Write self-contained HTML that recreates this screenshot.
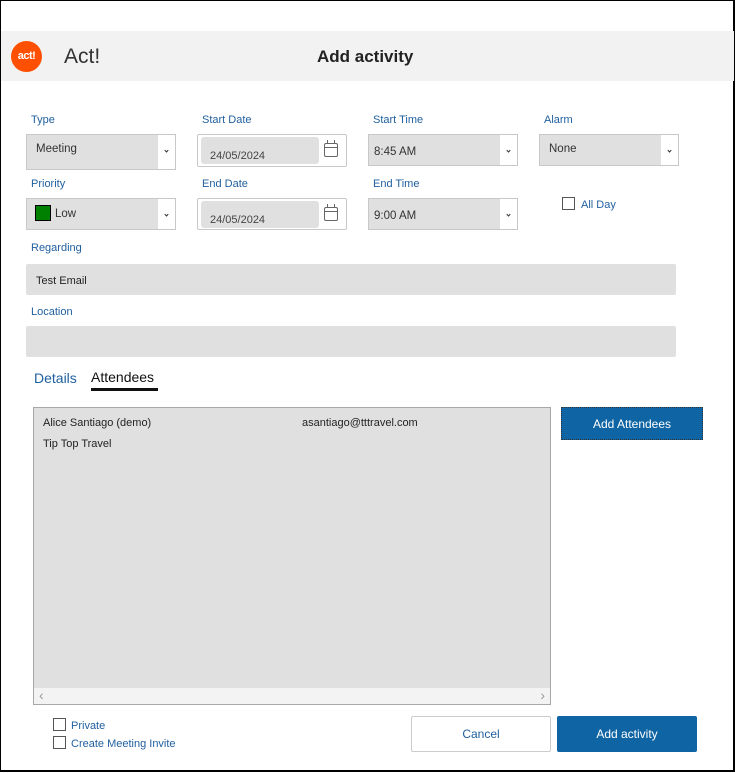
<!DOCTYPE html>
<html><head><meta charset="utf-8"><style>
*{box-sizing:border-box;margin:0;padding:0}
body{width:736px;height:773px;background:#fff;font-family:"Liberation Sans",sans-serif;position:relative;overflow:hidden}
.frame{position:absolute;left:0;top:0;width:735px;height:772px;border:1px solid #000;border-right-width:2px;border-bottom-width:2px}
.a{position:absolute}
.hdr{left:1px;top:31px;width:733px;height:50px;background:#f2f2f2}
.lbl{position:absolute;font-size:11px;color:#1f5f9f}
.sel{position:absolute;height:36px;border:1px solid #c8c8c8;background:#e0e0e0;font-size:11.5px;color:#333}
.sel .arr{position:absolute;right:0;top:0;width:17px;height:100%;background:#fff}
.sel .arr:after{content:"";position:absolute;left:7px;top:14px;width:2px;height:2px;border-right:1px solid #333;border-bottom:1px solid #333;transform:rotate(45deg)}
.date{position:absolute;height:33px;border:1px solid #c8c8c8;background:#fff;border-radius:2px}
.date .in{position:absolute;left:3px;top:2px;width:118px;height:27px;background:#e0e0e0;border-radius:3px;font-size:11px;color:#444;padding:13px 0 0 9px;line-height:12px;overflow:hidden}
.cal{position:absolute;right:8px;top:8px;width:14px;height:14px;border:1.3px solid #666;border-radius:2px}
.cal:before{content:"";position:absolute;left:0;right:0;top:3px;border-top:1.3px solid #666}
.cal:after{content:"";position:absolute;left:2px;top:-4px;width:6px;height:3px;border-left:1.3px solid #666;border-right:1.3px solid #666}
.txt{position:absolute;height:31px;background:#e0e0e0;border-radius:2px;font-size:11px;color:#222;padding:11px 0 0 10px}
.cb{position:absolute;width:13px;height:13px;border:1px solid #555;background:#fff}
</style></head><body>
<div class="frame"></div>
<div class="a hdr"></div>
<div class="a" style="left:11px;top:41px;width:31px;height:31px;border-radius:50%;background:#fe5000;color:#fff;font-size:11px;font-weight:bold;text-align:center;line-height:31px;letter-spacing:-0.5px">act!</div>
<div class="a" style="left:64px;top:45px;font-size:21px;color:#333">Act!</div>
<div class="a" style="left:317px;top:47px;font-size:17px;font-weight:bold;color:#222">Add activity</div>

<div class="lbl" style="left:31px;top:114px">Type</div>
<div class="lbl" style="left:202px;top:114px">Start Date</div>
<div class="lbl" style="left:373px;top:114px">Start Time</div>
<div class="lbl" style="left:544px;top:114px">Alarm</div>

<div class="sel" style="left:26px;top:134px;width:150px"><span class="a" style="left:9px;top:8px">Meeting</span><div class="arr"></div></div>
<div class="date" style="left:197px;top:134px;width:150px"><div class="in">24/05/2024</div><div class="cal"></div></div>
<div class="sel" style="left:368px;top:134px;width:150px;height:32px"><span class="a" style="left:5px;top:11px">8:45 AM</span><div class="arr"></div></div>
<div class="sel" style="left:539px;top:134px;width:140px;height:32px"><span class="a" style="left:9px;top:8px">None</span><div class="arr"></div></div>

<div class="lbl" style="left:31px;top:178px">Priority</div>
<div class="lbl" style="left:202px;top:178px">End Date</div>
<div class="lbl" style="left:373px;top:178px">End Time</div>

<div class="sel" style="left:26px;top:198px;width:150px;height:32px"><span class="a" style="left:8px;top:6px;width:16px;height:16px;background:#008000;border:1px solid #000"></span><span class="a" style="left:28px;top:9px">Low</span><div class="arr"></div></div>
<div class="date" style="left:197px;top:198px;width:150px;height:32px"><div class="in">24/05/2024</div><div class="cal"></div></div>
<div class="sel" style="left:368px;top:198px;width:150px;height:32px"><span class="a" style="left:5px;top:11px">9:00 AM</span><div class="arr"></div></div>
<div class="cb" style="left:562px;top:197px"></div>
<div class="lbl" style="left:581px;top:199px">All Day</div>

<div class="lbl" style="left:31px;top:242px">Regarding</div>
<div class="txt" style="left:26px;top:264px;width:650px">Test Email</div>
<div class="lbl" style="left:31px;top:306px">Location</div>
<div class="txt" style="left:26px;top:326px;width:650px"></div>

<div class="a" style="left:34px;top:370px;font-size:14px;color:#1f5f9f">Details</div>
<div class="a" style="left:91px;top:369px;font-size:14px;color:#111">Attendees</div>
<div class="a" style="left:91px;top:388px;width:67px;height:3px;background:#111"></div>

<div class="a" style="left:33px;top:407px;width:518px;height:298px;border:1px solid #a8a8a8;background:#e0e0e0">
<span class="a" style="left:9px;top:9px;font-size:11px;color:#222">Alice Santiago (demo)</span>
<span class="a" style="left:268px;top:9px;font-size:11px;color:#222">asantiago@tttravel.com</span>
<span class="a" style="left:9px;top:30px;font-size:11px;color:#222">Tip Top Travel</span>
<div class="a" style="left:0;bottom:0;width:516px;height:16px;background:#f3f3f3;color:#999;font-size:14px;line-height:14px"><span class="a" style="left:5px;top:0">‹</span><span class="a" style="right:5px;top:0">›</span></div>
</div>
<div class="a" style="left:561px;top:407px;width:142px;height:33px;background:#0f64a3;border:1px dotted #333;color:#fff;font-size:12px;text-align:center;line-height:33px">Add Attendees</div>

<div class="cb" style="left:53px;top:718px"></div>
<div class="lbl" style="left:71px;top:720px">Private</div>
<div class="cb" style="left:53px;top:736px"></div>
<div class="lbl" style="left:71px;top:738px">Create Meeting Invite</div>

<div class="a" style="left:411px;top:716px;width:140px;height:36px;border:1px solid #ccc;border-radius:2px;color:#1f5f9f;font-size:12px;text-align:center;line-height:35px">Cancel</div>
<div class="a" style="left:557px;top:716px;width:140px;height:36px;background:#0f64a3;border-radius:2px;color:#fff;font-size:12px;text-align:center;line-height:37px">Add activity</div>
</body></html>
